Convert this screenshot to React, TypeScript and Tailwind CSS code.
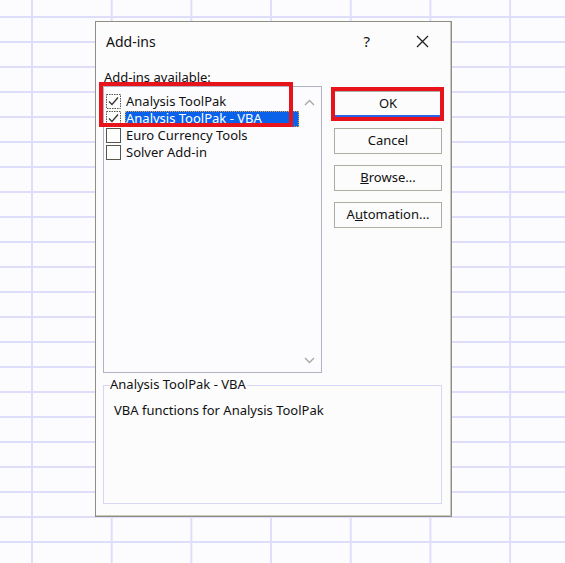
import React from "react";

function Check({ checked }: { checked: boolean }) {
  return (
    <svg width="15" height="15" viewBox="0 0 15 15" className="shrink-0">
      <rect x="0.5" y="0.5" width="14" height="14" fill="#fdfdfd" stroke="#55554a" strokeWidth="1" strokeDasharray={checked ? "1.5 1" : undefined} />
      {checked && <path d="M3 7.5 L6 10.5 L12 3.5" fill="none" stroke="#333" strokeWidth="1.3" />}
    </svg>
  );
}

export default function App() {
  const font = { fontFamily: '"Noto Sans", "DejaVu Sans", sans-serif' };
  return (
    <div
      className="relative w-[565px] h-[563px] overflow-hidden bg-[#fcfcff] bg-[linear-gradient(to_right,#dedefa_2px,transparent_2px),linear-gradient(to_bottom,#dedefa_2px,transparent_2px)] bg-[size:79.7px_25px] bg-[position:31px_16px]"
      style={font}
    >
      <div className="absolute left-[95px] top-[21px] w-[357px] h-[496px] border border-[#8e8e82] bg-[#fcfcfd] shadow-[inset_-1px_-1px_0_#c8c8c0] flex flex-col text-[13px] text-[#111]">
        {/* title */}
        <div className="h-[38px] flex items-center pl-[10px] shrink-0">
          <span className="text-[14px]">Add-ins</span>
          <span className="ml-auto mr-[46px] text-[15px]">?</span>
          <svg width="13" height="13" viewBox="0 0 13 13" className="mr-[22px]">
            <path d="M1 1 L12 12 M12 1 L1 12" stroke="#222" strokeWidth="1.3" />
          </svg>
        </div>
        <div className="pl-[8px] h-[25px] flex items-end leading-[16px]">Add-ins available:</div>
        <div className="flex pl-[7px] pt-[1px]">
          {/* listbox */}
          <div className="relative w-[219px] h-[287px] border border-[#b2b2c6] bg-[#fcfcfe] shrink-0">
            <div className="flex flex-col pt-[6px] pl-[2px]">
              {[
                { t: "Analysis ToolPak", c: true, s: false },
                { t: "Analysis ToolPak - VBA", c: true, s: true },
                { t: "Euro Currency Tools", c: false, s: false },
                { t: "Solver Add-in", c: false, s: false },
              ].map((r) => (
                <div key={r.t} className="flex items-center h-[17px] gap-[4px]">
                  <Check checked={r.c} />
                  <span
                    className={
                      r.s
                        ? "bg-[#0a62ea] text-white w-[174px] h-[16px] leading-[15px] pl-[1px] outline-1 outline-dotted outline-[#e8a040] -outline-offset-1"
                        : "h-[16px] leading-[15px] pl-[1px]"
                    }
                  >
                    {r.t}
                  </span>
                </div>
              ))}
            </div>
            <svg width="11" height="7" viewBox="0 0 11 7" className="absolute left-[200px] top-[12px]">
              <path d="M1 6 L5.5 1.5 L10 6" fill="none" stroke="#a8a8a0" strokeWidth="1.4" />
            </svg>
            <svg width="11" height="7" viewBox="0 0 11 7" className="absolute left-[200px] top-[270px]">
              <path d="M1 1 L5.5 5.5 L10 1" fill="none" stroke="#a8a8a0" strokeWidth="1.4" />
            </svg>
          </div>
          {/* buttons */}
          <div className="flex flex-col ml-[12px] pt-[5px] gap-[11px]">
            {["OK", "Cancel", "Browse...", "Automation..."].map((b) => (
              <div
                key={b}
                className={
                  "w-[108px] h-[26px] flex items-center justify-center text-[13px] " +
                  (b === "OK"
                    ? "border border-[#adada4] border-b-2 border-b-[#2a64e6] border-l-[#2a64e6] bg-[#fcfcfc]"
                    : "border border-[#adada4] bg-[#fcfcfc]")
                }
              >
                {b === "Browse..." ? (
                  <span>
                    <span className="underline">B</span>rowse...
                  </span>
                ) : b === "Automation..." ? (
                  <span>
                    A<span className="underline">u</span>tomation...
                  </span>
                ) : (
                  b
                )}
              </div>
            ))}
          </div>
        </div>
        {/* group box */}
        <div className="relative ml-[7px] mt-[12px] w-[339px] h-[119px] border border-[#d6d6f6]">
          <span className="absolute left-[6px] top-[-10px] bg-[#fcfcfd] leading-[16px] pr-[1px]">Analysis ToolPak - VBA</span>
          <div className="pl-[10px] pt-[16px] leading-[16px]">VBA functions for Analysis ToolPak</div>
        </div>
      </div>
      {/* red highlight boxes */}
      <div className="absolute left-[99px] top-[82px] w-[194px] h-[45px] border-4 border-[#e8141c] pointer-events-none" />
      <div className="absolute left-[331px] top-[87px] w-[113px] h-[34px] border-4 border-[#e8141c] pointer-events-none" />
    </div>
  );
}
